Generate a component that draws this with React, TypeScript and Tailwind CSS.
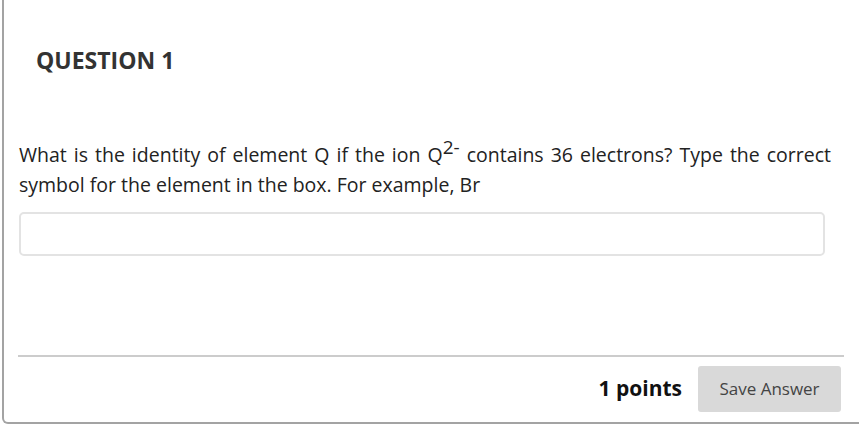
export default function App() {
  return (
    <div className="h-[424px] w-[859px] overflow-hidden bg-white font-['Open_Sans',sans-serif]">
      <div className="ml-[2px] flex h-[424px] w-[866px] flex-col rounded-b-[6px] border-x-2 border-b-2 border-[#a3a3a3] pl-[15px]">
        <h2 className="mt-[44px] pl-[17px] text-[23px] font-bold leading-[32px] text-[#333]">QUESTION 1</h2>

        <p className="mt-[64px] w-[812px] text-justify text-[19.5px] leading-[30px] text-[#222]">
          What is the identity of element Q if the ion Q
          <sup className="top-[-0.42em] text-[19px]">2-</sup> contains 36 electrons? Type the correct symbol for the
          element in the box. For example, Br
        </p>

        <input
          type="text"
          className="mt-[12px] h-[44px] w-[806px] rounded-[5px] border-2 border-[#e3e3e3] bg-white px-3 outline-none"
        />

        <div className="mt-[99px] ml-[-1px] h-[2px] w-[826px] bg-[#cccccc]" />

        <div className="mt-[9px] flex w-[822px] items-center justify-end gap-4">
          <span className="text-[21px] font-bold text-[#111]">1 points</span>
          <button className="h-[46px] w-[143px] rounded-[3px] bg-[#d9d9d9] text-[17px] text-[#444]">Save Answer</button>
        </div>
      </div>
    </div>
  );
}
